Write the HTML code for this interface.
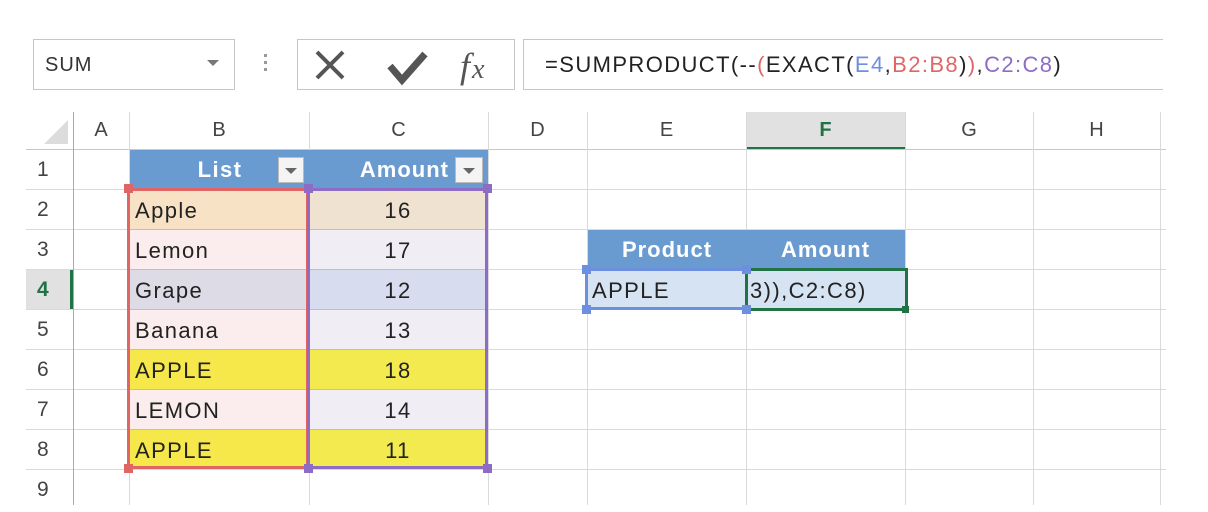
<!DOCTYPE html>
<html><head><style>
body{margin:0;width:1208px;height:512px;background:#fff;position:relative;overflow:hidden;font-family:"Liberation Sans",sans-serif;color:#222}
div{position:absolute;box-sizing:border-box}
.t{font-size:22px;line-height:40px;white-space:nowrap;letter-spacing:1.4px}
.hl{height:1px;background:#d9d9d9}
.vl{width:1px;background:#d9d9d9}
.ch{font-size:20px;color:#444;text-align:center;top:112px;line-height:36px}
.rh{font-size:21px;color:#444;left:26px;width:47px;text-align:left;padding-left:11px;line-height:40px}
.h{width:9px;height:9px}
</style></head><body>
<!-- formula bar -->
<div style="left:33px;top:39px;width:202px;height:51px;border:1px solid #c6c6c6"></div>
<div class="t" style="left:45px;top:45px;font-size:20px;color:#333;letter-spacing:1px">SUM</div>
<div style="left:207px;top:60px;width:0;height:0;border-left:6px solid transparent;border-right:6px solid transparent;border-top:6px solid #777"></div>
<div style="left:264px;top:54px;width:3px;height:3px;background:#999;box-shadow:0 7px #999,0 14px #999"></div>
<div style="left:297px;top:39px;width:218px;height:51px;border:1px solid #c6c6c6"></div>
<svg style="position:absolute;left:310px;top:46px" width="200" height="40"><path d="M7 6 L33 32 M33 6 L7 32" stroke="#555" stroke-width="4"/><path d="M80 20 L92 34 L115 8" stroke="#555" stroke-width="7" fill="none"/><text x="150" y="32" font-family="Liberation Serif" font-style="italic" font-size="36" fill="#555">f</text><text x="162" y="32" font-family="Liberation Serif" font-style="italic" font-size="28" fill="#555">x</text></svg>
<div style="left:523px;top:39px;width:640px;height:51px;border:1px solid #c6c6c6;border-right:none"></div>
<div class="t" style="left:545px;top:45px;color:#222">=SUMPRODUCT(--<span style="color:#e06666">(</span>EXACT(<span style="color:#6d8fe0">E4</span>,<span style="color:#e06666">B2:B8</span>)<span style="color:#e06666">)</span>,<span style="color:#8e6cc6">C2:C8</span>)</div>
<!-- column header -->
<div style="left:746px;top:112px;width:159px;height:38px;background:#e1e1e1;border-bottom:3px solid #217346"></div>
<svg style="position:absolute;left:40px;top:118px" width="30" height="28"><path d="M28 2 L28 26 L4 26 Z" fill="#dcdcdc"/></svg>
<div class="ch" style="left:73px;width:56px">A</div>
<div class="ch" style="left:129px;width:180px">B</div>
<div class="ch" style="left:309px;width:179px">C</div>
<div class="ch" style="left:488px;width:99px">D</div>
<div class="ch" style="left:587px;width:159px">E</div>
<div class="ch" style="left:746px;width:159px;font-weight:bold;color:#217346">F</div>
<div class="ch" style="left:905px;width:128px">G</div>
<div class="ch" style="left:1033px;width:127px">H</div>
<!-- grid lines -->
<div class="hl" style="left:26px;top:149px;width:1140px;background:#c8c8c8"></div>
<div class="hl" style="left:26px;top:189px;width:1140px"></div>
<div class="hl" style="left:26px;top:229px;width:1140px"></div>
<div class="hl" style="left:26px;top:269px;width:1140px"></div>
<div class="hl" style="left:26px;top:309px;width:1140px"></div>
<div class="hl" style="left:26px;top:349px;width:1140px"></div>
<div class="hl" style="left:26px;top:389px;width:1140px"></div>
<div class="hl" style="left:26px;top:429px;width:1140px"></div>
<div class="hl" style="left:26px;top:469px;width:1140px"></div>
<div class="vl" style="left:73px;top:112px;height:393px;background:#aaa"></div>
<div class="vl" style="left:129px;top:112px;height:393px"></div>
<div class="vl" style="left:309px;top:112px;height:393px"></div>
<div class="vl" style="left:488px;top:112px;height:393px"></div>
<div class="vl" style="left:587px;top:112px;height:393px"></div>
<div class="vl" style="left:746px;top:112px;height:393px"></div>
<div class="vl" style="left:905px;top:112px;height:393px"></div>
<div class="vl" style="left:1033px;top:112px;height:393px"></div>
<div class="vl" style="left:1160px;top:112px;height:393px"></div>
<!-- row headers -->
<div style="left:26px;top:270px;width:47px;height:39px;background:#e1e1e1;border-right:3px solid #217346"></div>
<div class="rh" style="top:150px">1</div>
<div class="rh" style="top:190px">2</div>
<div class="rh" style="top:230px">3</div>
<div class="rh" style="top:270px;font-weight:bold;color:#217346">4</div>
<div class="rh" style="top:310px">5</div>
<div class="rh" style="top:350px">6</div>
<div class="rh" style="top:390px">7</div>
<div class="rh" style="top:430px">8</div>
<div class="rh" style="top:470px">9</div>
<!-- table 1 -->
<div style="left:130px;top:150px;width:358px;height:38px;background:#6a9bd0"></div>
<div class="t" style="left:130px;top:150px;width:180px;text-align:center;color:#fff;font-weight:bold;padding-right:0">List</div>
<div class="t" style="left:310px;top:150px;width:139px;text-align:right;color:#fff;font-weight:bold;letter-spacing:1px">Amount</div>
<div style="left:278px;top:157px;width:26px;height:26px;background:#f4f4f4;border:1px solid #bbb"></div>
<div style="left:285px;top:168px;border-left:6px solid transparent;border-right:6px solid transparent;border-top:6px solid #666"></div>
<div style="left:455px;top:157px;width:28px;height:26px;background:#f4f4f4;border:1px solid #bbb"></div>
<div style="left:463px;top:168px;border-left:6px solid transparent;border-right:6px solid transparent;border-top:6px solid #666"></div>
<!-- rows -->
<div style="left:130px;top:190px;width:178px;height:39px;background:#f8e2c6"></div><div style="left:310px;top:190px;width:176px;height:39px;background:#f0e2d0"></div>
<div style="left:130px;top:230px;width:178px;height:39px;background:#fbeded"></div><div style="left:310px;top:230px;width:176px;height:39px;background:#f1edf4"></div>
<div style="left:130px;top:270px;width:178px;height:39px;background:#dcdbe6"></div><div style="left:310px;top:270px;width:176px;height:39px;background:#d7dcee"></div>
<div style="left:130px;top:310px;width:178px;height:39px;background:#fbeded"></div><div style="left:310px;top:310px;width:176px;height:39px;background:#f1edf4"></div>
<div style="left:130px;top:350px;width:178px;height:39px;background:#f6e84a"></div><div style="left:310px;top:350px;width:176px;height:39px;background:#f2ea4e"></div>
<div style="left:130px;top:390px;width:178px;height:39px;background:#fbeded"></div><div style="left:310px;top:390px;width:176px;height:39px;background:#f1edf4"></div>
<div style="left:130px;top:430px;width:178px;height:39px;background:#f6e84a"></div><div style="left:310px;top:430px;width:176px;height:39px;background:#f2ea4e"></div>
<div class="hl" style="left:130px;top:229px;width:356px;background:#a9c3e6"></div>
<div class="hl" style="left:130px;top:269px;width:356px;background:#a9c3e6"></div>
<div class="hl" style="left:130px;top:309px;width:356px;background:#a9c3e6"></div>
<div class="hl" style="left:130px;top:349px;width:356px;background:#a9c3e6"></div>
<div class="hl" style="left:130px;top:389px;width:356px;background:#a9c3e6"></div>
<div class="hl" style="left:130px;top:429px;width:356px;background:#a9c3e6"></div>
<div class="t" style="left:135px;top:191px">Apple</div><div class="t" style="left:310px;top:191px;width:176px;text-align:center">16</div>
<div class="t" style="left:135px;top:231px">Lemon</div><div class="t" style="left:310px;top:231px;width:176px;text-align:center">17</div>
<div class="t" style="left:135px;top:271px">Grape</div><div class="t" style="left:310px;top:271px;width:176px;text-align:center">12</div>
<div class="t" style="left:135px;top:311px">Banana</div><div class="t" style="left:310px;top:311px;width:176px;text-align:center">13</div>
<div class="t" style="left:135px;top:351px">APPLE</div><div class="t" style="left:310px;top:351px;width:176px;text-align:center">18</div>
<div class="t" style="left:135px;top:391px">LEMON</div><div class="t" style="left:310px;top:391px;width:176px;text-align:center">14</div>
<div class="t" style="left:135px;top:431px">APPLE</div><div class="t" style="left:310px;top:431px;width:176px;text-align:center">11</div>
<!-- range borders -->
<div style="left:127px;top:188px;width:182px;height:281px;border:3px solid #e06666"></div>
<div style="left:307px;top:188px;width:181px;height:281px;border:3px solid #8e6cc6"></div>
<div class="h" style="left:124px;top:184px;background:#e06666"></div>
<div class="h" style="left:124px;top:464px;background:#e06666"></div>
<div class="h" style="left:304px;top:184px;background:#8e6cc6"></div>
<div class="h" style="left:304px;top:464px;background:#8e6cc6"></div>
<div class="h" style="left:483px;top:184px;background:#8e6cc6"></div>
<div class="h" style="left:483px;top:464px;background:#8e6cc6"></div>
<!-- table 2 -->
<div style="left:588px;top:230px;width:317px;height:38px;background:#6a9bd0"></div>
<div class="t" style="left:588px;top:230px;width:158px;text-align:center;color:#fff;font-weight:bold;letter-spacing:1px">Product</div>
<div class="t" style="left:746px;top:230px;width:159px;text-align:center;color:#fff;font-weight:bold;letter-spacing:1px">Amount</div>
<div style="left:588px;top:270px;width:317px;height:39px;background:#d6e3f3"></div>
<div class="t" style="left:592px;top:271px">APPLE</div>
<div class="t" style="left:750px;top:271px">3)),C2:C8)</div>
<div style="left:745px;top:268px;width:163px;height:43px;border:3px solid #217346"></div>
<div style="left:585px;top:268px;width:163px;height:42px;border:3px solid #6d8fe0;border-right:none"></div>
<div class="h" style="left:582px;top:265px;background:#6d8fe0"></div>
<div class="h" style="left:582px;top:305px;background:#6d8fe0"></div>
<div class="h" style="left:742px;top:265px;background:#6d8fe0"></div>
<div class="h" style="left:742px;top:305px;background:#6d8fe0"></div>
<div class="h" style="left:902px;top:306px;width:7px;height:7px;background:#217346"></div>
</body></html>
